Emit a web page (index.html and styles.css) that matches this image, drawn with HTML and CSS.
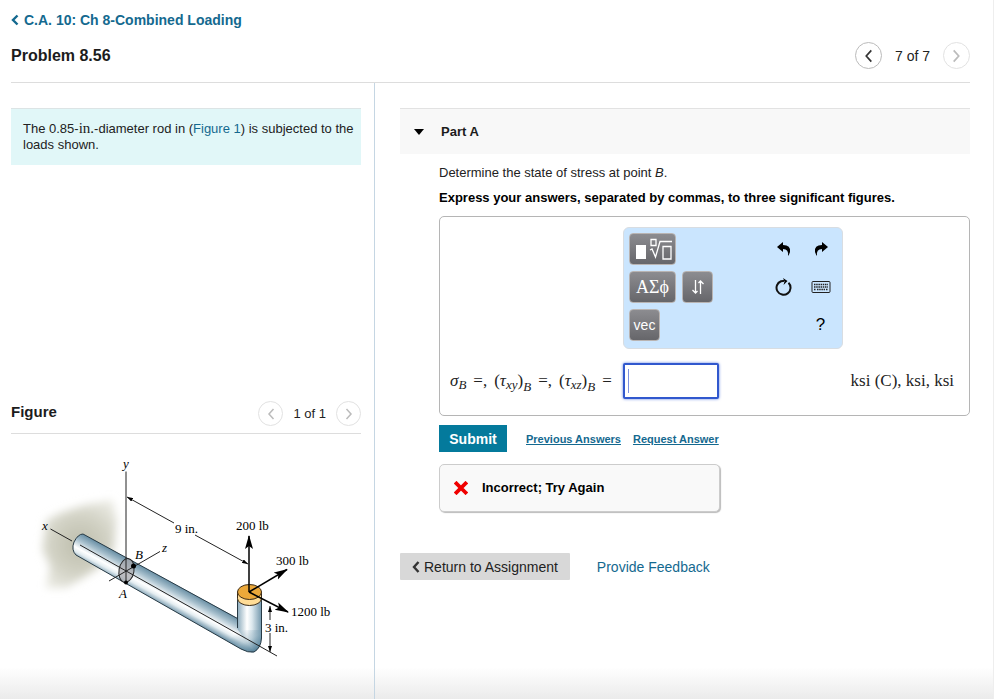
FILE: index.html
```html
<!DOCTYPE html>
<html lang="en">
<head>
<meta charset="utf-8">
<title>Problem 8.56</title>
<link rel="stylesheet" href="styles.css">
</head>
<body>
<header class="header">
  <a class="crumb" href="#"><svg width="8" height="12" viewBox="0 0 8 12"><path d="M6.500 1.500 2 6l4.500 4.500" fill="none" stroke="currentColor" stroke-width="2.400"/></svg>C.A. 10: Ch 8-Combined Loading</a>
  <div class="title-row">
    <h1>Problem 8.56</h1>
    <nav class="pager" aria-label="Problems">
      <button class="round strong" aria-label="Previous problem"><svg width="9" height="14" viewBox="0 0 8 12"><path d="M6.500 1 2 6l4.500 5"/></svg></button>
      <span>7 of 7</span>
      <button class="round" aria-label="Next problem"><svg width="9" height="14" viewBox="0 0 8 12"><path d="M1.500 1 6 6l-4.500 5"/></svg></button>
    </nav>
  </div>
</header>
<div class="columns">
  <aside class="left">
    <p class="statement">The 0.85-<span class="unit">in.</span>-diameter rod in (<a href="#figure">Figure 1</a>) is subjected to the loads shown.</p>
    <section class="figure" id="figure">
      <div class="figure-head">
        <h2>Figure</h2>
        <nav class="pager small" aria-label="Figures">
          <button class="round" aria-label="Previous figure"><svg width="8" height="12" viewBox="0 0 8 12"><path d="M6.500 1 2 6l4.500 5"/></svg></button>
          <span>1 of 1</span>
          <button class="round" aria-label="Next figure"><svg width="8" height="12" viewBox="0 0 8 12"><path d="M1.500 1 6 6l-4.500 5"/></svg></button>
        </nav>
      </div>
      <svg class="drawing" viewBox="11 434 350 236" role="img" aria-label="Rod with applied loads">
        <defs>
          <linearGradient id="rod" gradientUnits="userSpaceOnUse" x1="166" y1="578" x2="153" y2="602">
            <stop offset="0" stop-color="#5f879e"/><stop offset=".3" stop-color="#a9c1ce"/><stop offset=".58" stop-color="#fff"/><stop offset=".72" stop-color="#e4edf1"/><stop offset="1" stop-color="#547f98"/>
          </linearGradient>
          <linearGradient id="post" gradientUnits="userSpaceOnUse" x1="237" y1="0" x2="262" y2="0">
            <stop offset="0" stop-color="#86a7b9"/><stop offset=".4" stop-color="#fff"/><stop offset=".6" stop-color="#dce8ee"/><stop offset="1" stop-color="#6d93a9"/>
          </linearGradient>
          <linearGradient id="elbow" gradientUnits="userSpaceOnUse" x1="243" y1="630" x2="255" y2="652">
            <stop offset="0" stop-color="#5b859d" stop-opacity="0"/><stop offset=".45" stop-color="#7fa3b6" stop-opacity=".4"/><stop offset="1" stop-color="#4f7c95"/>
          </linearGradient>
          <radialGradient id="wall" gradientUnits="userSpaceOnUse" cx="80" cy="545" r="48">
            <stop offset="0" stop-color="#bdbdab"/><stop offset=".6" stop-color="#d2d2c5"/><stop offset="1" stop-color="#e8e8e0"/>
          </radialGradient>
          <filter id="soft" x="-30%" y="-30%" width="160%" height="160%"><feGaussianBlur stdDeviation="4"/></filter>
          <marker id="big" viewBox="0 0 14 10" refX="13" refY="5" markerWidth="14" markerHeight="10" markerUnits="userSpaceOnUse" orient="auto"><path d="M0 1 14 5 0 9 3 5z"/></marker>
          <marker id="tiny" viewBox="0 0 6 4" refX="6" refY="2" markerWidth="6" markerHeight="4" markerUnits="userSpaceOnUse" orient="auto-start-reverse"><path d="M0 0 6 2 0 4z"/></marker>
        </defs>
        <path d="M46 520 60 513 84 505 112 500 117 520 114 550 98 568 86 576 66 588 46 588 50 566 42 550z" fill="url(#wall)" filter="url(#soft)"/>
        <path d="M83 534 238 618.500 256 628 261 640Q259 650 254 652 248 653 241 649L76 555Q71 550 74 542 78 534 83 534z" fill="url(#rod)"/>
        <path d="M237.500 592H261.500V638Q261 648 254 652L237.500 629z" fill="url(#post)"/>
        <path d="M237.500 630 261.500 630V638Q261 648 254 652 248 653 241 649L228 642z" fill="url(#elbow)"/>
        <path d="M237.500 618.500 83 534Q78 534 74 542 71 550 76 555L241 649Q248 653 254 652 261 648 261.500 638V592M237.500 592V628" fill="none" stroke="#273a45"/>
        <path d="M237.500 592V598.500A12 7 0 0 0 261.500 598.500V592z" fill="#ffdc96" stroke="#3a2b18"/>
        <ellipse cx="249.500" cy="592" rx="12" ry="7.500" fill="#eba83a" stroke="#3a2b18"/>
        <ellipse cx="126.500" cy="570.500" rx="7.500" ry="12" transform="rotate(10 126.500 570.500)" fill="#a9a9ad" fill-opacity=".75" stroke="#222"/>
        <g fill="none" stroke="#222" stroke-width="1">
          <path d="M126 471.500V583M50.500 529 72 541M80 545 277 656M109 581 160 551.500"/>
          <path d="M174 523 127 497" marker-end="url(#tiny)"/>
          <path d="M195 535 248 564" marker-end="url(#tiny)"/>
          <path d="M270 620V606" marker-end="url(#tiny)"/>
          <path d="M270 633V652" marker-end="url(#tiny)"/>
        </g>
        <circle cx="126" cy="582.500" r="2"/><circle cx="133.500" cy="566" r="2.500"/>
        <g fill="none" stroke="#000" stroke-width="1.500">
          <path d="M249 592V536" marker-end="url(#big)"/>
          <path d="M249 592 287 569.500" marker-end="url(#big)"/>
          <path d="M249 592 288 612" marker-end="url(#big)"/>
        </g>
        <g class="labels">
          <text x="236" y="530">200 lb</text><text x="276" y="565">300 lb</text><text x="291" y="616">1200 lb</text>
          <text x="175" y="533">9 in.</text><text x="265" y="632">3 in.</text>
          <g font-style="italic"><text x="123" y="468">y</text><text x="42" y="530">x</text><text x="162" y="552">z</text><text x="135" y="559">B</text><text x="119" y="598">A</text></g>
        </g>
      </svg>
    </section>
  </aside>
  <main class="right">
    <div class="part-head">
      <svg width="10" height="6" viewBox="0 0 10 6"><path d="M0 0H10L5 6z"/></svg>
      <h2>Part A</h2>
    </div>
    <div class="part">
      <p>Determine the state of stress at point <i>B</i>.</p>
      <p class="express">Express your answers, separated by commas, to three significant figures.</p>
      <div class="answer">
        <div class="tools">
          <div class="templates">
            <button class="key wide" aria-label="Templates"><svg width="38" height="24" viewBox="0 0 38 24"><path d="M2 8h10v14H2z" fill="#fff"/><path d="M17 2.500h5v6h-5zM29 9.500h8v12.500H29zM16 13l2-1 3.500 8L26 4.500H38" fill="none" stroke="#fff" stroke-width="1.300"/></svg></button>
            <button class="key wide greek">ΑΣϕ</button>
            <button class="key" aria-label="Swap"><svg width="14" height="16" viewBox="0 0 14 16"><path d="M4.500 1v13M1.500 11l3 3 2-2M9.500 15V2M12.500 5l-3-3-2 2" fill="none" stroke="#fff" stroke-width="1.300"/></svg></button>
            <button class="key vec">vec</button>
          </div>
          <div class="actions">
            <button aria-label="Undo"><svg width="14" height="14" viewBox="0 0 14 14"><path d="M0 5 6 0V3Q14 3 13 10 12 13 11 14 12 7 6 7V10z"/></svg></button>
            <button aria-label="Redo"><svg width="14" height="14" viewBox="0 0 14 14"><path d="M14 5 8 0V3Q0 3 1 10 2 13 3 14 2 7 8 7V10z"/></svg></button>
            <button aria-label="Reset"><svg width="18" height="18" viewBox="0 0 18 18"><path d="M13.500 4.800A7 7 0 1 1 6 3.200Q7.500 2.800 9 3" fill="none" stroke="#111" stroke-width="2"/><path d="M8 0 12.500 3 8.500 7 9.500 3.500z"/></svg></button>
            <button aria-label="Keyboard"><svg width="20" height="12" viewBox="0 0 20 12"><rect x="1" y=".5" width="18" height="11" rx="1" fill="none" stroke="#222"/><path d="M3 3.500H17M3 6H17M3 8.500H5M6 8.500H14M15 8.500H17" stroke="#222" stroke-width="1.500" stroke-dasharray="1.500 .7"/></svg></button>
            <button class="help" aria-label="Help">?</button>
          </div>
        </div>
        <label class="math" for="stress"><span><i>σ</i><sub>B</sub></span><span>=,</span><span>(<i>τ</i><sub>xy</sub>)<sub class="low">B</sub></span><span>=,</span><span>(<i>τ</i><sub>xz</sub>)<sub class="low">B</sub></span><span>=</span></label>
        <div class="entry"><input id="stress" type="text"></div>
        <span class="units">ksi (C), ksi, ksi</span>
      </div>
      <div class="submit-row">
        <button class="submit">Submit</button>
        <a href="#">Previous Answers</a>
        <a href="#">Request Answer</a>
      </div>
      <div class="feedback" role="status">
        <svg width="14" height="14" viewBox="0 0 14 14"><path d="M2.500 2.500 11.500 11.500M11.500 2.500 2.500 11.500" stroke="#f00000" stroke-width="3.800" stroke-linecap="square"/></svg>
        <strong>Incorrect; Try Again</strong>
      </div>
    </div>
    <div class="bottom-row">
      <button class="return"><svg width="8" height="12" viewBox="0 0 8 12"><path d="M6.500 1 2 6l4.500 5" fill="none" stroke="#333" stroke-width="2.400"/></svg>Return to Assignment</button>
      <a href="#">Provide Feedback</a>
    </div>
  </main>
</div>
</body>
</html>
```
FILE: styles.css
```css
* { box-sizing: border-box; }
body {
  margin: 0;
  min-height: 100vh;
  display: flex;
  flex-direction: column;
  font: 13px/16px "Liberation Sans", Arial, sans-serif;
  color: #222;
  background: linear-gradient(to top, #ebebeb, #fff 32px);
  border-right: 1px solid #eee;
}
h1, h2, p { margin: 0; }
h1, h2 { color: #1c1c1c; }
a { color: #14698f; text-decoration: none; }
button { font: inherit; margin: 0; padding: 0; border: 0; background: none; }
svg { display: block; }
.header {
  margin: 0 23px 0 11px;
  padding-top: 11px;
  border-bottom: 1px solid #ddd;
}
.crumb {
  display: flex;
  width: fit-content;
  align-items: center;
  gap: 5px;
  font-size: 14px;
  line-height: 18px;
  font-weight: bold;
}
.title-row {
  display: flex;
  align-items: center;
  justify-content: space-between;
  height: 53px;
}
h1 { font-size: 16px; line-height: 20px; }
.pager { display: flex; align-items: center; gap: 13px; font-size: 14px; }
.round {
  width: 27px;
  height: 27px;
  border: 1px solid #e2e2e2;
  border-radius: 50%;
  display: grid;
  place-items: center;
  background: #fff;
  color: #bbb;
}
.round path { fill: none; stroke: currentColor; stroke-width: 1.5; }
.strong { border-color: #bbb; color: #333; }
.small { gap: 10px; font-size: 13px; }
.small .round { width: 25px; height: 25px; }
.columns { flex: 1; display: flex; }
.left {
  flex: 0 0 375px;
  padding: 25px 13px 29px 11px;
  border-right: 1px solid #c5d6e3;
  display: flex;
  flex-direction: column;
}
.statement {
  padding: 12px 0 12px 12px;
  min-height: 57px;
  background: #e1f7f8;
  border-top: 1px solid #dce4e5;
}
.unit { font-family: "Liberation Serif", serif; font-size: 15px; line-height: 1; }
.figure { margin-top: auto; }
.figure-head {
  display: flex;
  justify-content: space-between;
  align-items: center;
  height: 40px;
  border-bottom: 1px solid #ddd;
}
.figure-head h2 { font-size: 15px; line-height: 24px; padding-bottom: 4px; }
.drawing { width: 100%; }
.labels { font: 13px "Liberation Serif", serif; }
.right { flex: 1; min-width: 0; padding: 25px 23px 20px 25px; }
.part-head {
  display: flex;
  align-items: center;
  gap: 17px;
  height: 46px;
  padding-left: 14px;
  background: #f8f8f8;
  border-top: 1px solid #e2e2e2;
}
.part-head h2 { font-size: 13px; }
.part { margin-left: 39px; padding-top: 11px; }
.express { margin-top: 9px; font-weight: bold; color: #000; }
.answer {
  display: grid;
  grid-template-columns: 173px 220px 1fr;
  align-items: center;
  row-gap: 14px;
  min-height: 200px;
  margin-top: 10px;
  padding: 10px 15px 16px 10px;
  border: 1px solid #b5b5b5;
  border-radius: 5px;
  align-content: start;
}
.tools {
  grid-column: 2;
  height: 122px;
  padding: 5px;
  display: flex;
  justify-content: space-between;
  background: #cae5fe;
  border: 1px solid #d8dde2;
  border-radius: 6px;
}
.templates {
  display: grid;
  grid-template-columns: 31px 16px 37px;
  grid-auto-rows: 32px;
  row-gap: 6px;
}
.key {
  width: 31px;
  display: grid;
  place-items: center;
  border: 1px solid #b9b4b2;
  border-radius: 4px;
  background: linear-gradient(#8c8c90, #66666a);
  color: #fff;
}
.wide { width: 47px; grid-column: 1 / 3; }
.wide + .key:not(.wide) { grid-column: 3; margin-left: 6px; }
.greek { font: 18px/20px "Liberation Serif", serif; }
.vec { grid-column: 1; font-size: 14px; }
.actions {
  display: grid;
  grid-template-columns: 37px 37px;
  grid-auto-rows: 32px;
  row-gap: 6px;
  margin-right: -2px;
}
.actions button { display: grid; place-items: center; }
.actions .help { grid-column: 2; font-size: 17px; }
.math {
  grid-column: 1;
  display: flex;
  align-items: baseline;
  gap: 7px;
  font: 17px/24px "Liberation Serif", serif;
  white-space: nowrap;
}
.math sub { font-size: 13px; line-height: 0; font-style: italic; vertical-align: -3px; }
.math .low { vertical-align: -5px; }
.entry { display: flex; }
.entry input {
  width: 96px;
  height: 36px;
  padding: 4px;
  border: 2px solid #3158ce;
  border-radius: 2px;
  box-shadow: 0 0 3px #5b7ee0;
  outline: 0;
  font: 22px "Liberation Serif", serif;
  caret-color: transparent;
  background: #fff linear-gradient(#7b8fe0, #7b8fe0) 3px center / 1px 24px no-repeat;
}
.units { justify-self: end; font: 17px/24px "Liberation Serif", serif; }
.submit-row {
  display: flex;
  align-items: center;
  margin-top: 9px;
  font-size: 11px;
  font-weight: bold;
}
.submit-row a { text-decoration: underline; margin-right: 12px; }
.submit {
  width: 68px;
  height: 27px;
  margin-right: 19px;
  background: #047a9c;
  color: #fff;
  font-size: 14px;
}
.feedback {
  display: flex;
  align-items: center;
  gap: 14px;
  max-width: 281px;
  height: 48px;
  margin-top: 12px;
  padding-left: 14px;
  background: #f9f9f9;
  border: 1px solid #ccc;
  border-radius: 5px;
  box-shadow: 1px 1px 1px #bbb;
  color: #000;
}
.bottom-row { display: flex; align-items: center; gap: 27px; margin-top: 41px; font-size: 14px; }
.return {
  display: flex;
  align-items: center;
  gap: 4px;
  height: 27px;
  padding: 0 12px;
  background: #d8d8d8;
  border-radius: 1px;
  color: #222;
}
```
